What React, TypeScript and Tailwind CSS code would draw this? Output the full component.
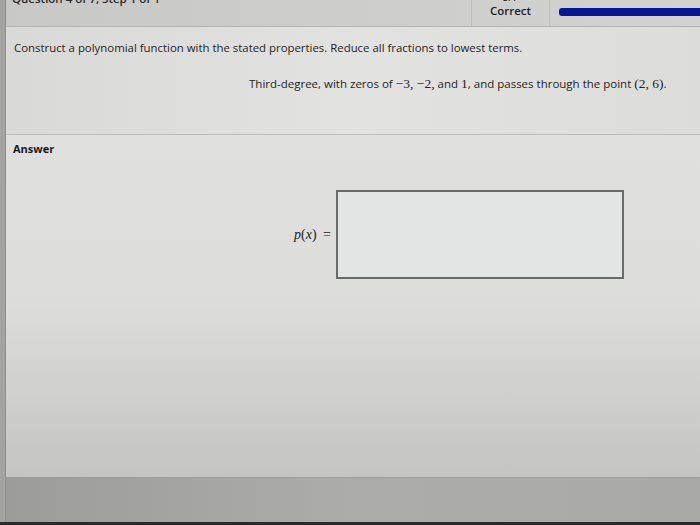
const serif = "font-['Liberation_Serif','DejaVu_Serif',serif]";

export default function App() {
  return (
    <div className="w-[700px] h-[525px] overflow-hidden flex flex-col bg-[#a3a3a1] font-['Open_Sans','Noto_Sans',sans-serif] text-[#1f1f1f]">
      <div className="flex-1 flex flex-col ml-[5px] border-l border-[#8f8f8f]">
        {/* header */}
        <div className="h-[27px] flex border-b border-[#b4b4b2] bg-linear-to-r from-[#c8c8c6] to-[#d2d2d0]">
          <div className="flex-1 pl-[6px] -mt-[8px] text-[11.5px] font-semibold text-[#2a2a2a] leading-[14px] whitespace-nowrap">
            Question 4 of 7, Step 1 of 1
          </div>
          <div className="w-[78px] border-l border-[#bdbdbb] flex flex-col items-center">
            <span className="-mt-[9px] text-[10px] font-semibold leading-[12px] text-[#333]">5/7</span>
            <span className="mt-[1px] text-[11.5px] font-semibold leading-[14px] text-[#1e1e1e]">Correct</span>
          </div>
          <div className="w-[151px] border-l border-[#bdbdbb] pl-[9px] pt-[8px]">
            <div className="h-[8px] w-[144px] rounded-[3px] bg-[#0a1690]" />
          </div>
        </div>
        {/* question */}
        <div className="h-[108px] flex flex-col bg-linear-to-r from-[#d9d9d7] via-[#e2e2e0] to-[#dcdcda] border-b border-[#bdbdbb]">
          <p className="pl-[8px] pt-[13px] text-[11.4px] leading-[16px] text-[#1f1f1f] whitespace-nowrap">
            Construct a polynomial function with the stated properties. Reduce all fractions to lowest terms.
          </p>
          <p className="mt-[19px] pl-[243px] text-[11.5px] leading-[18px] text-[#1f1f1f] whitespace-nowrap">
            Third-degree, with zeros of <span className={`${serif} text-[13.5px]`}>−3, −2,</span> and{" "}
            <span className={`${serif} text-[13.5px]`}>1</span>, and passes through the point{" "}
            <span className={`${serif} text-[13.5px]`}>(2, 6)</span>.
          </p>
        </div>
        {/* answer */}
        <div className="flex-1 flex flex-col bg-linear-to-b from-[#e0e0de] via-[#dcdcda] to-[#c4c4c2] border-b border-[#9c9c9a]">
          <div className="pl-[7px] pt-[7px] text-[11px] font-bold leading-[14px] text-[#1a1a1a]">Answer</div>
          <div className="mt-[34px] flex items-center">
            <div className={`w-[330px] pr-[5px] text-right ${serif} text-[14px] text-[#222]`}>
              <i>p</i>(<i>x</i>) <span className="ml-[3px]">=</span>
            </div>
            <div className="w-[288px] h-[89px] border-2 border-[#6a6a6a] bg-[#e3e5e4]" />
          </div>
        </div>
        <div className="h-[44px] bg-linear-to-r from-[#9c9c9a] via-[#acacaa] to-[#a9a9a7]" />
      </div>
      <div className="h-[3px] bg-[#2a2a2a]" />
    </div>
  );
}
